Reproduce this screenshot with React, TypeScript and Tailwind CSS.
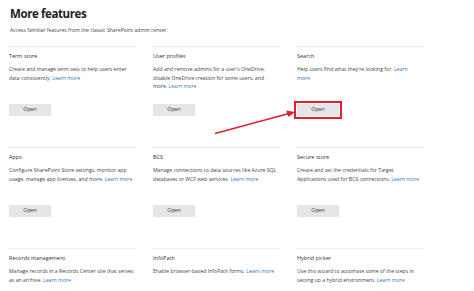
import React from "react";

type Feature = {
  title: string;
  lines: React.ReactNode[];
  highlight?: boolean;
};

const Learn = ({ children = "Learn more" }: { children?: React.ReactNode }) => (
  <span className="text-[#2f78c4]">{children}</span>
);

const rows: Feature[][] = [
  [
    {
      title: "Term store",
      lines: [
        "Create and manage term sets to help users enter",
        <>
          data consistently. <Learn />
        </>,
      ],
    },
    {
      title: "User profiles",
      lines: [
        "Add and remove admins for a user's OneDrive,",
        "disable OneDrive creation for some users, and",
        <>
          more. <Learn />
        </>,
      ],
    },
    {
      title: "Search",
      highlight: true,
      lines: [
        <>
          Help users find what they're looking for. <Learn>Learn</Learn>
        </>,
        <Learn>more</Learn>,
      ],
    },
  ],
  [
    {
      title: "Apps",
      lines: [
        "Configure SharePoint Store settings, monitor app",
        <>
          usage, manage app licenses, and more. <Learn />
        </>,
      ],
    },
    {
      title: "BCS",
      lines: [
        "Manage connections to data sources like Azure SQL",
        <>
          databases or WCF web services. <Learn />
        </>,
      ],
    },
    {
      title: "Secure store",
      lines: [
        "Create and set the credentials for Target",
        <>
          Applications used for BCS connections. <Learn />
        </>,
      ],
    },
  ],
  [
    {
      title: "Records management",
      lines: [
        "Manage records in a Records Center site that serves",
        <>
          as an archive. <Learn />
        </>,
      ],
    },
    {
      title: "InfoPath",
      lines: [
        <>
          Enable browser-based InfoPath forms. <Learn />
        </>,
      ],
    },
    {
      title: "Hybrid picker",
      lines: [
        "Use this wizard to automate some of the steps in",
        <>
          setting up a hybrid environment. <Learn />
        </>,
      ],
    },
  ],
];

// the last row's buttons sit below the fold, so they're left out
function FeatureCell({ f, showButton }: { f: Feature; showButton: boolean }) {
  return (
    <div className="flex h-[101px] flex-col border-t border-[#ebebeb] pt-[4px]">
      <div className="px-[1px] text-[5.5px] leading-[10px] text-[#333]">{f.title}</div>
      <div className="mt-[4px] h-[39px] px-[1px] text-[5.15px] leading-[8.5px] text-[#444]">
        {f.lines.map((l, i) => (
          <div key={i} className="whitespace-nowrap">
            {l}
          </div>
        ))}
      </div>
      {showButton && (
        <div className="flex px-[1px]">
          <button
            className={
              "flex h-[12px] w-[42px] items-center justify-center bg-[#e6e6e6] text-[5.2px] leading-none text-[#333] " +
              (f.highlight ? "outline-2 outline-offset-[1px] outline-[#e3202a]" : "")
            }
          >
            Open
          </button>
        </div>
      )}
    </div>
  );
}

export default function App() {
  return (
    <div
      className="relative h-[291px] w-[474px] overflow-hidden bg-white px-2"
      style={{ fontFamily: '"Open Sans", "Noto Sans", sans-serif' }}
    >
      <div className="px-[2px] pt-[6px]">
        <h1 className="text-[11.5px] font-bold leading-[16px] tracking-[-0.4px] text-[#222]">
          More features
        </h1>
        <p className="mt-[4px] text-[5.15px] leading-[8px] text-[#444]">
          Access familiar features from the classic SharePoint admin center.
        </p>
      </div>
      <div className="mt-[12px] flex flex-col">
        {rows.map((row, ri) => (
          <div key={ri} className="grid grid-cols-[128px_128px_128px] gap-x-4">
            {row.map((f) => (
              <FeatureCell key={f.title} f={f} showButton={ri < rows.length - 1} />
            ))}
          </div>
        ))}
      </div>
      <svg className="pointer-events-none absolute left-0 top-0" width="474" height="291">
        <line x1="215" y1="133.5" x2="289" y2="113.5" stroke="#e3202a" strokeWidth="1.5" />
        <polygon points="295,112 286,110.5 288.5,117" fill="#e3202a" />
      </svg>
    </div>
  );
}
